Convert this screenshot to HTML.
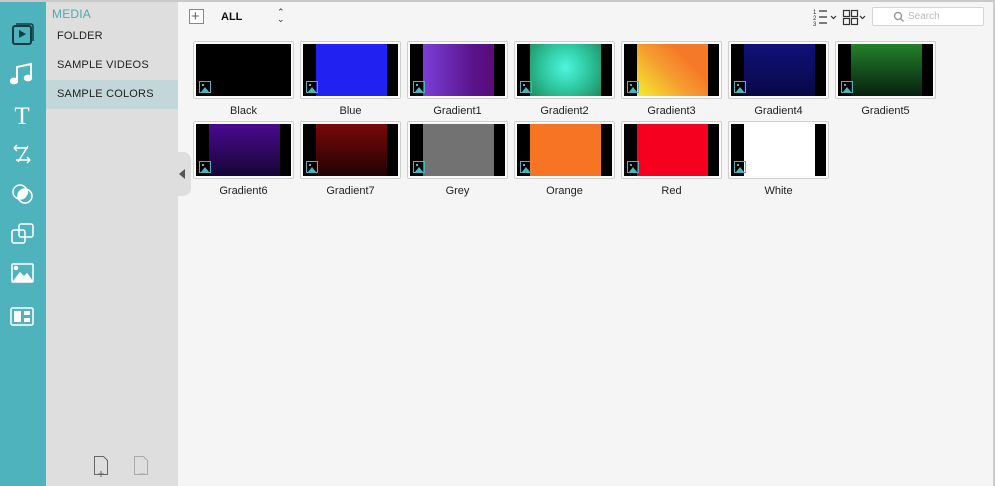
<!DOCTYPE html>
<html><head><meta charset="utf-8"><style>
*{margin:0;padding:0;box-sizing:border-box}
body{width:995px;height:486px;overflow:hidden;background:#f5f5f5;font-family:"Liberation Sans",sans-serif;position:relative}
.abs{position:absolute}
#top{left:0;top:0;width:995px;height:2px;background:#c9c9c9}
#side{left:0;top:2px;width:46px;height:484px;background:#4fb3bd}
#panel{left:46px;top:2px;width:132px;height:484px;background:#dedede}
.item{position:absolute;left:11px;font-size:11px;color:#222;letter-spacing:0.2px}
.sel{position:absolute;left:0;top:78px;width:132px;height:29px;background:#c3d6da}
.card{position:absolute;width:101px;height:58px;border:1px solid #cfcfcf;border-radius:2px;background:#fafafa;padding:2px}
.img{width:95px;height:52px;background:#000;position:relative;overflow:hidden}
.fill{position:absolute;left:13px;top:0;width:71px;height:52px}
.ic{position:absolute;left:3px;top:37px;width:12px;height:12px;border:1px solid #4fb3bd}
.ic:before{content:"";position:absolute;left:2px;top:2px;width:2px;height:2px;background:#4fb3bd}
.ic:after{content:"";position:absolute;left:1px;bottom:0;border-left:4.5px solid transparent;border-right:4.5px solid transparent;border-bottom:5px solid #4fb3bd}
.lbl{position:absolute;width:101px;text-align:center;font-size:11px;color:#222}
#right{left:993px;top:2px;width:2px;height:484px;background:#ccc}
</style></head><body>
<div class="abs" id="top"></div>
<div class="abs" id="side">
<svg width="46" height="340" style="position:absolute;left:0;top:-2px" fill="none" stroke="#fff" stroke-width="1.5">
<rect x="13" y="26" width="18" height="18" rx="2" stroke="#143c44" stroke-width="2"/><path d="M16 24h15a2 2 0 0 1 2 2v15" stroke="#143c44" stroke-width="1.5"/><path d="M19 30l7 4-7 4z" fill="#143c44" stroke="none"/>
<path d="M17 81V67l14-3v13" stroke-width="2"/><ellipse cx="14" cy="81" rx="3.5" ry="2.6" fill="#fff"/><ellipse cx="28" cy="78" rx="3.5" ry="2.6" fill="#fff"/>
<text x="22" y="124" text-anchor="middle" font-family="Liberation Serif" font-size="25" fill="#fff" stroke="none">T</text>
<path d="M14 148h14M14 148l3-3M14 148l3 3M16 160h14M30 160l-3-3M30 160l-3 3M18 162l10-16" />
<circle cx="20" cy="192" r="7"/><circle cx="25" cy="196" r="7"/><ellipse cx="23" cy="194" rx="5" ry="3" fill="#fff" transform="rotate(-35 23 194)"/>
<rect x="12" y="230" width="13" height="13" rx="2"/><rect x="19" y="224" width="14" height="13" rx="2"/>
<rect x="12" y="264" width="21" height="18" rx="1"/><path d="M14 281l6-8 4 4 3-3 5 7z" fill="#fff"/><circle cx="16" cy="268" r="1.5" fill="#fff"/>
<rect x="11" y="308" width="22" height="17" rx="1.5"/><rect x="14" y="311" width="7" height="11" fill="#fff" stroke="none"/><rect x="24" y="311" width="6" height="4" fill="#fff" stroke="none"/><rect x="24" y="318" width="6" height="4" fill="#fff" stroke="none"/>
</svg>
</div>
<div class="abs" id="panel">
<div class="sel"></div>
<div class="item" style="left:6px;top:5px;color:#4fa8b2;font-size:12px">MEDIA</div>
<div class="item" style="top:28px">FOLDER</div>
<div class="item" style="top:57px">SAMPLE VIDEOS</div>
<div class="item" style="top:86px">SAMPLE COLORS</div>
<svg style="position:absolute;left:40px;top:452px" width="80" height="26" fill="none" stroke="#666" stroke-width="1">
<path d="M8.5 2.5h9l4 4v14h-13z"/><path d="M15 17v6M12 20h6"/>
<path d="M48.5 2.5h9l4 4v14h-13z" stroke="#aaa"/><path d="M53 20h6" stroke="#aaa"/>
</svg>
</div>
<div class="abs" style="left:178px;top:152px;width:13px;height:44px;background:#dedede;border-radius:0 8px 8px 0"></div>
<div class="abs" style="left:179px;top:169px;border-right:6px solid #555;border-top:5px solid transparent;border-bottom:5px solid transparent"></div>
<div class="abs" id="right"></div>
<div class="abs" style="left:189px;top:9px;width:15px;height:15px;border:1px solid #888;background:#fff"></div>
<div class="abs" style="left:191px;top:9px;font-size:15px;color:#666;line-height:15px">+</div>
<div class="abs" style="left:221px;top:11px;font-size:11px;color:#111;font-weight:bold">ALL</div>
<div class="abs" style="left:277px;top:9px;font-size:9px;color:#333;line-height:7px">&#8963;<br>&#8964;</div>
<svg class="abs" style="left:810px;top:7px" width="65" height="20" fill="none" stroke="#333" stroke-width="1.2">
<path d="M9 4h8M9 10h8M9 16h8"/><text x="3" y="7" font-size="6" fill="#333" stroke="none">1</text><text x="3" y="13" font-size="6" fill="#333" stroke="none">2</text><text x="3" y="19" font-size="6" fill="#333" stroke="none">3</text>
<path d="M21 9l2.5 2.5L26 9"/>
<rect x="33.5" y="3.5" width="6" height="6"/><rect x="41.5" y="3.5" width="6" height="6"/><rect x="33.5" y="11.5" width="6" height="6"/><rect x="41.5" y="11.5" width="6" height="6"/>
<path d="M50 9l2.5 2.5L55 9"/>
</svg>
<div class="abs" style="left:872px;top:7px;width:112px;height:19px;border:1px solid #d5d5d5;background:#fff;border-radius:2px"></div>
<svg class="abs" style="left:893px;top:11px" width="12" height="12" fill="none" stroke="#999" stroke-width="1.4"><circle cx="5" cy="5" r="3.5"/><path d="M7.5 7.5l3 3"/></svg>
<div class="abs" style="left:908px;top:11px;font-size:10px;color:#bbb">Search</div>

<div class="card" style="left:193px;top:41px"><div class="img"><div class="ic"></div></div></div>
<div class="lbl" style="left:193px;top:105px">Black</div>
<div class="card" style="left:300px;top:41px"><div class="img"><div class="fill" style="background:#2121f2"></div><div class="ic"></div></div></div>
<div class="lbl" style="left:300px;top:105px">Blue</div>
<div class="card" style="left:407px;top:41px"><div class="img"><div class="fill" style="background:linear-gradient(90deg,#7b3fd8,#5a148a 70%,#5a0a7a)"></div><div class="ic"></div></div></div>
<div class="lbl" style="left:407px;top:105px">Gradient1</div>
<div class="card" style="left:514px;top:41px"><div class="img"><div class="fill" style="background:radial-gradient(circle at 50% 45%,#4ef5de,#2ec8a0 50%,#208a60)"></div><div class="ic"></div></div></div>
<div class="lbl" style="left:514px;top:105px">Gradient2</div>
<div class="card" style="left:621px;top:41px"><div class="img"><div class="fill" style="background:linear-gradient(45deg,#f5ee30,#f59a30 45%,#f57a28 70%)"></div><div class="ic"></div></div></div>
<div class="lbl" style="left:621px;top:105px">Gradient3</div>
<div class="card" style="left:728px;top:41px"><div class="img"><div class="fill" style="background:linear-gradient(180deg,#10107a,#080845)"></div><div class="ic"></div></div></div>
<div class="lbl" style="left:728px;top:105px">Gradient4</div>
<div class="card" style="left:835px;top:41px"><div class="img"><div class="fill" style="background:linear-gradient(180deg,#23802a,#072010)"></div><div class="ic"></div></div></div>
<div class="lbl" style="left:835px;top:105px">Gradient5</div>
<div class="card" style="left:193px;top:121px"><div class="img"><div class="fill" style="background:linear-gradient(180deg,#4a0a90,#150535)"></div><div class="ic"></div></div></div>
<div class="lbl" style="left:193px;top:185px">Gradient6</div>
<div class="card" style="left:300px;top:121px"><div class="img"><div class="fill" style="background:linear-gradient(180deg,#7a0808,#200303)"></div><div class="ic"></div></div></div>
<div class="lbl" style="left:300px;top:185px">Gradient7</div>
<div class="card" style="left:407px;top:121px"><div class="img"><div class="fill" style="background:#727272"></div><div class="ic"></div></div></div>
<div class="lbl" style="left:407px;top:185px">Grey</div>
<div class="card" style="left:514px;top:121px"><div class="img"><div class="fill" style="background:#f67424"></div><div class="ic"></div></div></div>
<div class="lbl" style="left:514px;top:185px">Orange</div>
<div class="card" style="left:621px;top:121px"><div class="img"><div class="fill" style="background:#f5001e"></div><div class="ic"></div></div></div>
<div class="lbl" style="left:621px;top:185px">Red</div>
<div class="card" style="left:728px;top:121px"><div class="img"><div class="fill" style="background:#fff"></div><div class="ic"></div></div></div>
<div class="lbl" style="left:728px;top:185px">White</div>
</body></html>
